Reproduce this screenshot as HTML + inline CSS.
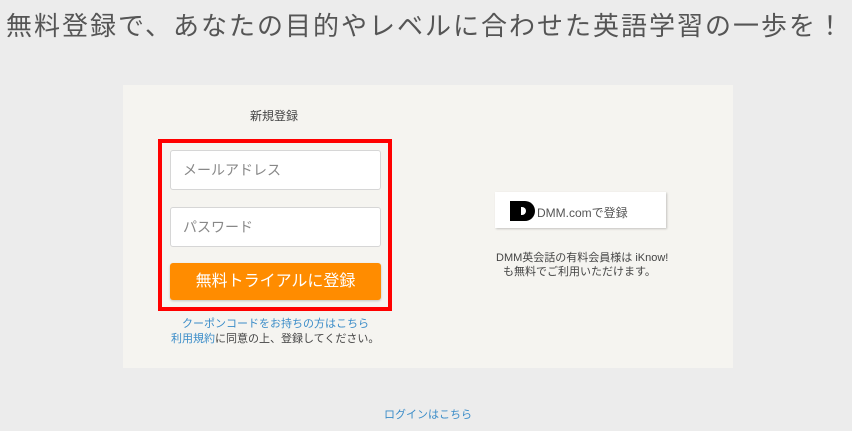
<!DOCTYPE html>
<html><head><meta charset="utf-8"><style>
body{margin:0;width:852px;height:431px;background:#ececec;font-family:"Liberation Sans","Noto Sans CJK JP",sans-serif;position:relative;overflow:hidden}
.a{position:absolute}
h1{position:absolute;left:6px;top:6px;margin:0;font-weight:normal;font-size:26px;color:#555;white-space:nowrap;letter-spacing:2px}
.panel{left:123px;top:85px;width:610px;height:283px;background:#f5f4f0}
.red{left:158px;top:139px;width:226px;height:164px;border:4px solid #f00}
.in{left:170px;width:209px;height:38px;background:#fff;border:1px solid #d6d6d6;border-radius:3px;font-size:14px;color:#888;line-height:38px;text-indent:12px}
.btn{left:170px;top:263px;width:211px;height:37px;background:#ff8c00;border-radius:3px;color:#fff;font-size:16px;text-align:center;line-height:37px;box-shadow:0 1px 2px rgba(0,0,0,.2)}
.s{font-size:11px;color:#444;white-space:nowrap}
.l{color:#3a8cc8}
</style></head><body>
<h1>無料登録で、あなたの目的やレベルに合わせた英語学習の一歩を！</h1>
<div class="a panel"></div>
<div class="a s" style="left:250px;top:107px;font-size:12px">新規登録</div>
<div class="a red"></div>
<div class="a in" style="top:150px">メールアドレス</div>
<div class="a in" style="top:207px">パスワード</div>
<div class="a btn">無料トライアルに登録</div>
<div class="a s l" style="left:182px;top:315px">クーポンコードをお持ちの方はこちら</div>
<div class="a s" style="left:171px;top:330px"><span class="l">利用規約</span>に同意の上、登録してください。</div>
<div class="a" style="left:495px;top:192px;width:171px;height:36px;background:#fff;box-shadow:1px 1px 2px rgba(0,0,0,.2)"></div>
<div class="a" style="left:510px;top:201px;width:10px;height:20px;background:#000"></div>
<div class="a" style="left:515px;top:201px;width:20px;height:20px;background:#000;border-radius:0 10px 10px 0"></div>
<div class="a" style="left:521px;top:207px;width:5px;height:8px;background:#fff;border-radius:0 4px 4px 0"></div>
<div class="a s" style="left:537px;top:204px;font-size:12px;color:#555">DMM.comで登録</div>
<div class="a s" style="left:496px;top:249px">DMM英会話の有料会員様は iKnow!</div>
<div class="a s" style="left:503px;top:263px">も無料でご利用いただけます。</div>
<div class="a s l" style="left:384px;top:406px">ログインはこちら</div>
</body></html>
